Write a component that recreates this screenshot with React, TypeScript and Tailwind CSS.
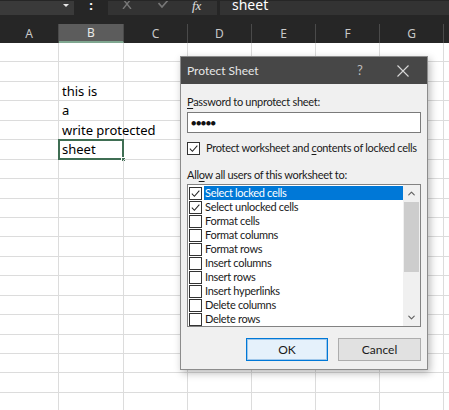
import { ChevronDown, ChevronUp } from 'lucide-react'

const COLS = [
  { key: 'A', w: 59 },
  { key: 'B', w: 65 },
  { key: 'C', w: 64 },
  { key: 'D', w: 64 },
  { key: 'E', w: 64 },
  { key: 'F', w: 64 },
  { key: 'G', w: 64 },
  { key: 'H', w: 64 },
]

const CELLS: Record<number, string> = {
  2: 'this is',
  3: 'a',
  4: 'write protected',
  5: 'sheet',
}

const OPTIONS = [
  { label: 'Select locked cells', checked: true },
  { label: 'Select unlocked cells', checked: true },
  { label: 'Format cells', checked: false },
  { label: 'Format columns', checked: false },
  { label: 'Format rows', checked: false },
  { label: 'Insert columns', checked: false },
  { label: 'Insert rows', checked: false },
  { label: 'Insert hyperlinks', checked: false },
  { label: 'Delete columns', checked: false },
  { label: 'Delete rows', checked: false },
]

const font = { fontFamily: '"Noto Sans", "Liberation Sans", sans-serif' }
const uiFont = { fontFamily: 'Lato, "Noto Sans", sans-serif' }

function Tick({ className = '' }: { className?: string }) {
  return (
    <svg viewBox="0 0 12 12" className={className} fill="none">
      <path d="M2 6.2 L4.8 9 L10.2 2.8" stroke="#222" strokeWidth="1.1" />
    </svg>
  )
}

function Box({ checked }: { checked: boolean }) {
  return (
    <span className="flex h-[13px] w-[13px] shrink-0 items-center justify-center border border-[#333] bg-white">
      {checked && <Tick className="h-[11px] w-[11px]" />}
    </span>
  )
}

function FormulaBar() {
  return (
    <div className="flex h-[15px] items-end overflow-hidden bg-[#262626]">
      <div className="flex h-[14px] items-start gap-[3px]">
        <div className="relative h-[14px] w-[74px] bg-[#3a3a3a]">
          <span className="absolute left-[63px] top-[3px] h-0 w-0 border-x-[3px] border-t-[3px] border-x-transparent border-t-[#e8e8e8]" />
        </div>
        <div className="flex h-[14px] w-[28px] justify-center text-[13px] font-bold leading-[8px] text-white">:</div>
        <div className="flex h-[14px] w-[109px] items-start bg-[#333333] pl-[14px] text-[#6a6a6a]">
          <svg viewBox="0 0 12 8" className="h-[8px] w-[12px]" fill="none">
            <path d="M1 -2 L9 8 M9 -2 L1 8" stroke="#777" strokeWidth="1.4" />
          </svg>
          <svg viewBox="0 0 12 8" className="ml-[24px] h-[8px] w-[12px]" fill="none">
            <path d="M0.5 2 L4 6 L11 -2" stroke="#777" strokeWidth="1.6" />
          </svg>
          <span
            className="ml-[22px] text-[13px] italic leading-[9px] text-[#e0e0e0]"
            style={{ fontFamily: '"Liberation Serif", serif' }}
          >
            fx
          </span>
        </div>
        <div className="h-[14px] w-[240px] bg-[#333333] pl-[12px] text-[14px] leading-[8px] text-white" style={font}>
          sheet
        </div>
      </div>
    </div>
  )
}

function ColumnHeaders() {
  return (
    <div className="flex h-[28px] items-end bg-[#262626]">
      {COLS.map((c) => (
        <div
          key={c.key}
          style={{ width: c.w, ...font }}
          className={`flex h-[19px] shrink-0 items-center justify-center border-r border-[#4a4a4a] text-[12px] ${
            c.key === 'B' ? 'border-b-2 border-b-[#7fa68f] bg-[#5c5c5c] text-[#e8e8e8]' : 'text-[#c8c8c8]'
          }`}
        >
          {c.key}
        </div>
      ))}
    </div>
  )
}

function Sheet() {
  return (
    <div className="bg-white">
      {Array.from({ length: 19 }).map((_, r) => (
        <div key={r} className="flex h-[19.45px]">
          {COLS.map((c) => {
            const text = c.key === 'B' ? CELLS[r] : undefined
            const active = c.key === 'B' && r === 5
            return (
              <div
                key={c.key}
                style={{ width: c.w }}
                className="relative shrink-0 border-b border-r border-[#dcdcdc]"
              >
                {text && (
                  <span
                    className="absolute left-[3px] top-[0px] z-10 whitespace-nowrap text-[13px] leading-[19px] text-black"
                    style={font}
                  >
                    {text}
                  </span>
                )}
                {active && (
                  <>
                    <span className="absolute -left-px -top-px bottom-[-1px] right-[-1px] border-2 border-[#3f6e53]" />
                    <span className="absolute -bottom-[3px] -right-[3px] h-[5px] w-[5px] border border-white bg-[#3f6e53]" />
                  </>
                )}
              </div>
            )
          })}
        </div>
      ))}
    </div>
  )
}

function ProtectDialog() {
  return (
    <div
      className="absolute left-[180px] top-[56px] w-[248px] border border-[#8c8c8c] bg-[#f0f0f0] shadow-[2px_3px_8px_rgba(0,0,0,0.28)]"
      style={uiFont}
    >
      <div className="flex h-[27px] items-center bg-[#474747] pl-[6px] text-[12px] text-[#e6e6e6]">
        <span className="flex-1">Protect Sheet</span>
        <span className="w-[20px] text-center text-[13px] text-[#bdbdbd]">?</span>
        <svg viewBox="0 0 12 12" className="ml-[27px] mr-[18px] h-[12px] w-[12px]" fill="none">
          <path d="M0.5 0.5 L11.5 11.5 M11.5 0.5 L0.5 11.5" stroke="#d8d8d8" strokeWidth="1.1" />
        </svg>
      </div>

      <div className="px-[6px] pt-[11px] text-[11px] tracking-[-0.3px] text-[#1a1a1a]">
        <div className="leading-[14px]">
          <span className="underline underline-offset-2">P</span>assword to unprotect sheet:
        </div>
        <div className="mt-[3px] flex h-[21px] items-center border border-[#7a7a7a] bg-white pl-[3px] text-[9px] tracking-[-0.5px] text-[#111]">
          ●●●●●
        </div>

        <div className="mt-[8px] flex items-center gap-[6px] whitespace-nowrap">
          <Box checked />
          <span className="leading-[14px]">
            Protect worksheet and <span className="underline underline-offset-2">c</span>ontents of locked cells
          </span>
        </div>

        <div className="mt-[13px] leading-[14px]">
          All<span className="underline underline-offset-2">o</span>w all users of this worksheet to:
        </div>

        <div className="mt-[2px] flex h-[143px] border border-[#828282] bg-white">
          <div className="flex-1 pl-px pt-px">
            {OPTIONS.map((o, i) => (
              <div key={o.label} className="flex h-[14px] items-center gap-[2px]">
                <Box checked={o.checked} />
                <span
                  className={`flex h-[14px] flex-1 items-center pl-[1px] leading-[14px] ${
                    i === 0 ? 'bg-[#0078d7] text-white' : ''
                  }`}
                >
                  {o.label}
                </span>
              </div>
            ))}
          </div>
          <div className="flex w-[17px] flex-col bg-[#f0f0f0]">
            <div className="flex h-[17px] items-center justify-center">
              <ChevronUp className="h-[11px] w-[11px] text-[#606060]" strokeWidth={2.5} />
            </div>
            <div className="mx-px h-[70px] bg-[#cdcdcd]" />
            <div className="flex-1" />
            <div className="flex h-[17px] items-center justify-center">
              <ChevronDown className="h-[11px] w-[11px] text-[#606060]" strokeWidth={2.5} />
            </div>
          </div>
        </div>

        <div className="mt-[11px] flex justify-end gap-[10px] pb-[8px] text-[12px] tracking-normal">
          <button
            type="button"
            className="h-[23px] w-[82px] border border-[#0078d7] bg-[#e5f1fb] shadow-[inset_0_0_0_1px_#9fc7ea] text-[#1a1a1a]"
          >
            OK
          </button>
          <button type="button" className="h-[23px] w-[83px] border border-[#adadad] bg-[#e1e1e1] text-[#1a1a1a]">
            Cancel
          </button>
        </div>
      </div>
    </div>
  )
}

export default function App() {
  return (
    <div className="relative h-[410px] w-[449px] overflow-hidden bg-white">
      <FormulaBar />
      <ColumnHeaders />
      <Sheet />
      <ProtectDialog />
    </div>
  )
}
